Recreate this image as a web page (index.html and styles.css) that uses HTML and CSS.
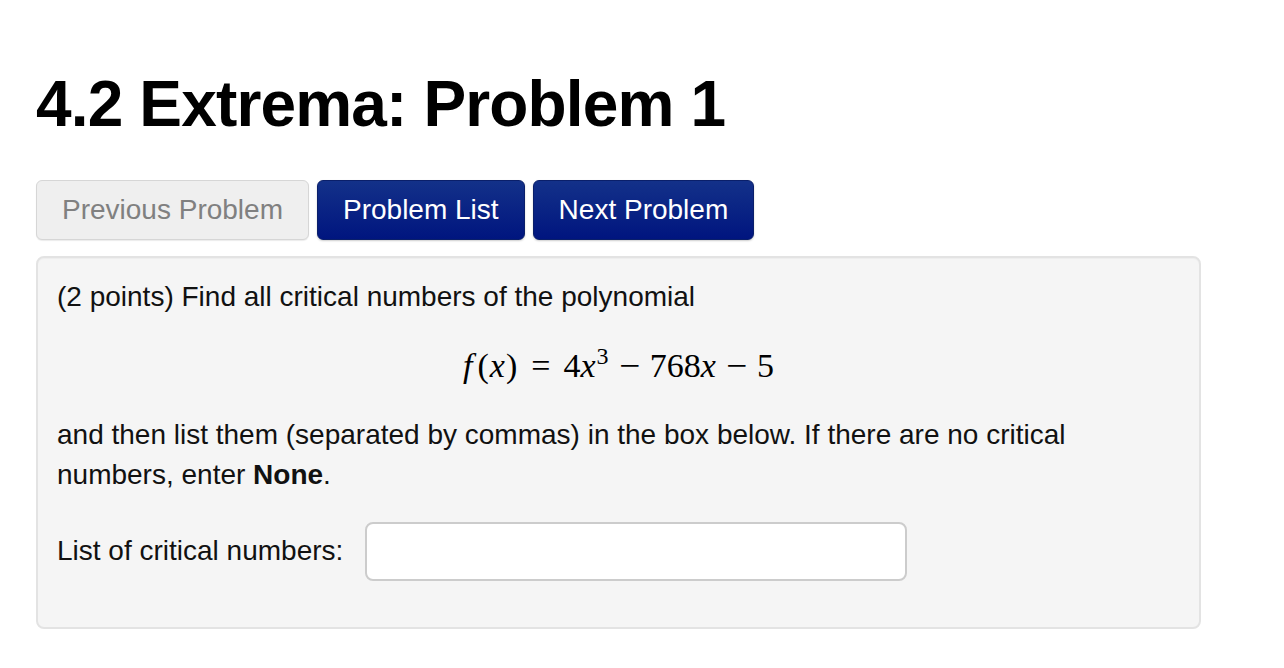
FILE: index.html
```html
<!DOCTYPE html>
<html>
<head>
<meta charset="utf-8">
<title>4.2 Extrema: Problem 1</title>
<link rel="stylesheet" href="styles.css">
</head>
<body>
<main class="page">
  <h1 class="title">4.2 Extrema: Problem 1</h1>
  <nav class="nav">
    <span class="btn btn-disabled">Previous Problem</span>
    <a class="btn btn-primary" href="#">Problem List</a>
    <a class="btn btn-primary" href="#">Next Problem</a>
  </nav>
  <section class="problem">
    <p class="para">(2 points) Find all critical numbers of the polynomial</p>
    <div class="math"><span class="mi mi-f">f</span><span class="mo-p">(</span><span class="mi">x</span><span class="mo-p">)</span><span class="rel">=</span><span>4</span><span class="mi">x</span><sup class="sup">3</sup><span class="bin">−</span><span>768</span><span class="mi">x</span><span class="bin">−</span><span>5</span></div>
    <p class="para para-last">and then list them (separated by commas) in the box below. If there are no critical numbers, enter <b class="strong">None</b>.</p>
    <div class="answer-row">
      <label class="label" for="ans">List of critical numbers:</label>
      <input class="answer" id="ans" type="text">
    </div>
  </section>
</main>
</body>
</html>
```

FILE: styles.css
```css
html, body {
  margin: 0;
  padding: 0;
  background: #ffffff;
}
body {
  font-family: "Liberation Sans", Arial, Helvetica, sans-serif;
  color: #111;
  font-size: 28px;
  line-height: 40px;
}
.page {
  padding: 69px 0 0 36px;
  width: 1165px;
}
.title {
  margin: 0;
  font-size: 64px;
  line-height: 70px;
  font-weight: bold;
  color: #000;
  letter-spacing: -0.85px;
}
.nav {
  display: flex;
  gap: 8px;
  margin-top: 41px;
}
.btn {
  display: inline-block;
  box-sizing: border-box;
  height: 60px;
  padding: 9px 25px;
  border-radius: 6px;
  font-size: 28px;
  line-height: 40px;
  text-decoration: none;
  border: 1px solid;
}
.btn-disabled {
  background: #efefef;
  border-color: #d6d6d6;
  color: #808080;
  box-shadow: 0 1px 1px rgba(0,0,0,0.08);
}
.btn-primary {
  background: linear-gradient(#133189, #00157f);
  border-color: #0a1f6a;
  color: #fff;
  box-shadow: 0 1px 2px rgba(0,0,0,0.2);
}
.problem {
  margin-top: 16px;
  background: #f5f5f5;
  border: 2px solid #e3e3e3;
  border-radius: 8px;
  padding: 19px 19px 46px 19px;
  box-shadow: inset 0 1px 1px rgba(0,0,0,0.03);
}
.para {
  margin: 0;
}
.para-last {
  margin-bottom: 27px;
}
.strong {
  font-weight: bold;
}
.math {
  margin: 20px 0;
  height: 58px;
  line-height: 58px;
  text-align: center;
  font-family: "Liberation Serif", "Times New Roman", serif;
  font-size: 34px;
  color: #000;
  padding-left: 0;
}
.mi {
  font-style: italic;
}
.mi-f {
  margin-right: 4px;
}
.mo-p {
  margin: 0 1px;
}
.rel {
  margin: 0 13px;
}
.bin {
  margin: 0 11px;
  display: inline-block;
  transform: scaleX(1.1);
}
.sup {
  font-size: 24px;
  line-height: 0;
  vertical-align: 13px;
  margin-left: 1px;
}
.answer-row {
  display: flex;
  align-items: center;
  gap: 22px;
}
.label {
  color: #111;
  position: relative;
  top: -1px;
}
.answer {
  box-sizing: border-box;
  width: 542px;
  height: 59px;
  border: 2px solid #cccccc;
  border-radius: 8px;
  background: #fff;
  font-size: 28px;
  padding: 0 12px;
  margin: 0;
}
```
